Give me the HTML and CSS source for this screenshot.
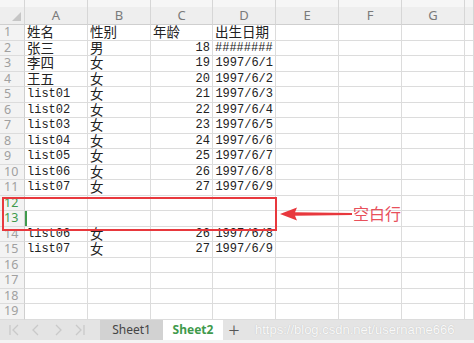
FILE: index.html
```html
<!DOCTYPE html>
<html lang="zh-CN">
<head>
    <meta charset="UTF-8">
    <title>Sheet2</title>
    <link rel="stylesheet" href="styles.css">
</head>
<body>

<div class="sheet">
    <div class="row head">
        <div class="cell corner"><span class="tri"></span></div>
        <div class="cell">A</div><div class="cell">B</div><div class="cell">C</div><div class="cell">D</div>
        <div class="cell">E</div><div class="cell">F</div><div class="cell">G</div><div class="cell"></div>
    </div>
    <div class="row">
        <div class="cell num">1</div>
        <div class="cell zh">姓名</div><div class="cell zh">性别</div><div class="cell zh">年龄</div><div class="cell zh">出生日期</div>
        <div class="cell"></div><div class="cell"></div><div class="cell"></div><div class="cell"></div>
    </div>
    <div class="row">
        <div class="cell num">2</div>
        <div class="cell zh">张三</div><div class="cell zh">男</div><div class="cell r">18</div><div class="cell">########</div>
        <div class="cell"></div><div class="cell"></div><div class="cell"></div><div class="cell"></div>
    </div>
    <div class="row">
        <div class="cell num">3</div>
        <div class="cell zh">李四</div><div class="cell zh">女</div><div class="cell r">19</div><div class="cell r">1997/6/1</div>
        <div class="cell"></div><div class="cell"></div><div class="cell"></div><div class="cell"></div>
    </div>
    <div class="row">
        <div class="cell num">4</div>
        <div class="cell zh">王五</div><div class="cell zh">女</div><div class="cell r">20</div><div class="cell r">1997/6/2</div>
        <div class="cell"></div><div class="cell"></div><div class="cell"></div><div class="cell"></div>
    </div>
    <div class="row">
        <div class="cell num">5</div>
        <div class="cell">list01</div><div class="cell zh">女</div><div class="cell r">21</div><div class="cell r">1997/6/3</div>
        <div class="cell"></div><div class="cell"></div><div class="cell"></div><div class="cell"></div>
    </div>
    <div class="row">
        <div class="cell num">6</div>
        <div class="cell">list02</div><div class="cell zh">女</div><div class="cell r">22</div><div class="cell r">1997/6/4</div>
        <div class="cell"></div><div class="cell"></div><div class="cell"></div><div class="cell"></div>
    </div>
    <div class="row">
        <div class="cell num">7</div>
        <div class="cell">list03</div><div class="cell zh">女</div><div class="cell r">23</div><div class="cell r">1997/6/5</div>
        <div class="cell"></div><div class="cell"></div><div class="cell"></div><div class="cell"></div>
    </div>
    <div class="row">
        <div class="cell num">8</div>
        <div class="cell">list04</div><div class="cell zh">女</div><div class="cell r">24</div><div class="cell r">1997/6/6</div>
        <div class="cell"></div><div class="cell"></div><div class="cell"></div><div class="cell"></div>
    </div>
    <div class="row">
        <div class="cell num">9</div>
        <div class="cell">list05</div><div class="cell zh">女</div><div class="cell r">25</div><div class="cell r">1997/6/7</div>
        <div class="cell"></div><div class="cell"></div><div class="cell"></div><div class="cell"></div>
    </div>
    <div class="row">
        <div class="cell num">10</div>
        <div class="cell">list06</div><div class="cell zh">女</div><div class="cell r">26</div><div class="cell r">1997/6/8</div>
        <div class="cell"></div><div class="cell"></div><div class="cell"></div><div class="cell"></div>
    </div>
    <div class="row">
        <div class="cell num">11</div>
        <div class="cell">list07</div><div class="cell zh">女</div><div class="cell r">27</div><div class="cell r">1997/6/9</div>
        <div class="cell"></div><div class="cell"></div><div class="cell"></div><div class="cell"></div>
    </div>
    <div class="row">
        <div class="cell num sel">12</div>
        <div class="cell"></div><div class="cell"></div><div class="cell"></div><div class="cell"></div>
        <div class="cell"></div><div class="cell"></div><div class="cell"></div><div class="cell"></div>
    </div>
    <div class="row">
        <div class="cell num sel">13</div>
        <div class="cell active"></div><div class="cell"></div><div class="cell"></div><div class="cell"></div>
        <div class="cell"></div><div class="cell"></div><div class="cell"></div><div class="cell"></div>
    </div>
    <div class="row">
        <div class="cell num">14</div>
        <div class="cell">list06</div><div class="cell zh">女</div><div class="cell r">26</div><div class="cell r">1997/6/8</div>
        <div class="cell"></div><div class="cell"></div><div class="cell"></div><div class="cell"></div>
    </div>
    <div class="row">
        <div class="cell num">15</div>
        <div class="cell">list07</div><div class="cell zh">女</div><div class="cell r">27</div><div class="cell r">1997/6/9</div>
        <div class="cell"></div><div class="cell"></div><div class="cell"></div><div class="cell"></div>
    </div>
    <div class="row">
        <div class="cell num">16</div>
        <div class="cell"></div><div class="cell"></div><div class="cell"></div><div class="cell"></div>
        <div class="cell"></div><div class="cell"></div><div class="cell"></div><div class="cell"></div>
    </div>
    <div class="row">
        <div class="cell num">17</div>
        <div class="cell"></div><div class="cell"></div><div class="cell"></div><div class="cell"></div>
        <div class="cell"></div><div class="cell"></div><div class="cell"></div><div class="cell"></div>
    </div>
    <div class="row">
        <div class="cell num">18</div>
        <div class="cell"></div><div class="cell"></div><div class="cell"></div><div class="cell"></div>
        <div class="cell"></div><div class="cell"></div><div class="cell"></div><div class="cell"></div>
    </div>
    <div class="row">
        <div class="cell num">19</div>
        <div class="cell"></div><div class="cell"></div><div class="cell"></div><div class="cell"></div>
        <div class="cell"></div><div class="cell"></div><div class="cell"></div><div class="cell"></div>
    </div>
</div>

<div class="tabs">
    <div class="nav">
        <svg width="22" height="20" viewBox="0 0 22 20"><path d="M7 5v10M15 5l-5 5 5 5" fill="none" stroke="#c9c9c9" stroke-width="1.3"/></svg>
        <svg width="22" height="20" viewBox="0 0 22 20"><path d="M13 5l-5 5 5 5" fill="none" stroke="#c9c9c9" stroke-width="1.3"/></svg>
        <svg width="22" height="20" viewBox="0 0 22 20"><path d="M9 5l5 5-5 5" fill="none" stroke="#c9c9c9" stroke-width="1.3"/></svg>
        <svg width="22" height="20" viewBox="0 0 22 20"><path d="M7 5l5 5-5 5M15 5v10" fill="none" stroke="#c9c9c9" stroke-width="1.3"/></svg>
    </div>
    <div class="tab">Sheet1</div>
    <div class="tab current">Sheet2</div>
    <div class="add">+</div>
</div>
<div class="foot"></div>

<!-- annotation drawn on top of the screenshot -->
<div class="mark"></div>
<svg class="arrow" width="74" height="16" viewBox="0 0 74 16">
    <path d="M0 8L17 1.5 15 6.3 72 7 72 9 15 9.7 17 14.5Z" fill="#e8383d"/>
</svg>
<div class="note">空白行</div>
<div class="watermark">https://blog.csdn.net/username666</div>

</body>
</html>
```

FILE: styles.css
```css
body {
    margin: 0;
    width: 474px;
    height: 343px;
    overflow: hidden;
    position: relative;
    background-color: #fff;
    font-family: "Noto Sans", sans-serif;
}
.row {
    display: grid;
    grid-template-columns: 25px 63px 63px 62px 63px 63px 63px 63px 9px;
    height: 15.5px;
}
.cell {
    box-sizing: border-box;
    border-right: 1px solid #dcdcdc;
    border-bottom: 1px solid #dcdcdc;
    padding: 1px 2px 0;
    font: 12px/13px "Liberation Mono", monospace;
    color: #222;
    white-space: nowrap;
    overflow: hidden;
}
.cell.zh {
    padding-top: 0;
    font: 13.5px/13px "Noto Sans CJK SC", sans-serif;
}
.cell.r {
    text-align: right;
}
.cell.num {
    background-color: #f3f3f3;
    border-right-color: #cfcfcf;
    color: #a0a0a0;
    padding: 0 0 0 4px;
    font: 12.5px/14px "Noto Sans", sans-serif;
}
.cell.num.sel {
    color: #3f9a4c;
}
.cell.active {
    box-shadow: inset 2px 0 0 #3f9a4c;
}
.head {
    height: 25px;
    background: linear-gradient(#f6f6f6 0, #f6f6f6 7px, #eeeeee 7px);
}
.head .cell {
    border-bottom-color: #cfcfcf;
    border-right-color: #d6d6d6;
    color: #7a7a7a;
    text-align: center;
    padding-top: 7px;
    font: 13px/16px "Noto Sans", sans-serif;
}
.head .corner {
    position: relative;
}
.tri {
    position: absolute;
    right: 3px;
    bottom: 3px;
    width: 0;
    height: 0;
    border-left: 9px solid transparent;
    border-bottom: 9px solid #c6c6c6;
}
.tabs {
    display: flex;
    height: 20px;
    background-color: #e4e4e4;
}
.nav {
    display: flex;
    width: 100px;
    padding-left: 3px;
    box-sizing: border-box;
}
.tab {
    width: 63px;
    background-color: #d2d2d2;
    color: #444;
    font: 12px/20px "Noto Sans", sans-serif;
    text-align: center;
}
.tab.current {
    width: 60px;
    background-color: #fff;
    color: #3f9a4c;
    font-weight: bold;
}
.add {
    width: 22px;
    text-align: center;
    color: #555;
    font: 300 20px/19px "Noto Sans", sans-serif;
}
.foot {
    height: 4px;
    background-color: #f4f4f4;
}
.mark {
    position: absolute;
    left: 2px;
    top: 197px;
    width: 275px;
    height: 34px;
    box-sizing: border-box;
    border: 2px solid #e8383d;
}
.arrow {
    position: absolute;
    left: 280px;
    top: 206px;
}
.note {
    position: absolute;
    left: 353px;
    top: 204px;
    color: #e8505b;
    font: 16px/18px "Noto Sans CJK SC", sans-serif;
}
.watermark {
    position: absolute;
    left: 255px;
    top: 321px;
    color: #fafafa;
    font: 13px/18px "Liberation Sans", sans-serif;
    text-shadow: 0 0 1px #b5b5b5;
}
```
